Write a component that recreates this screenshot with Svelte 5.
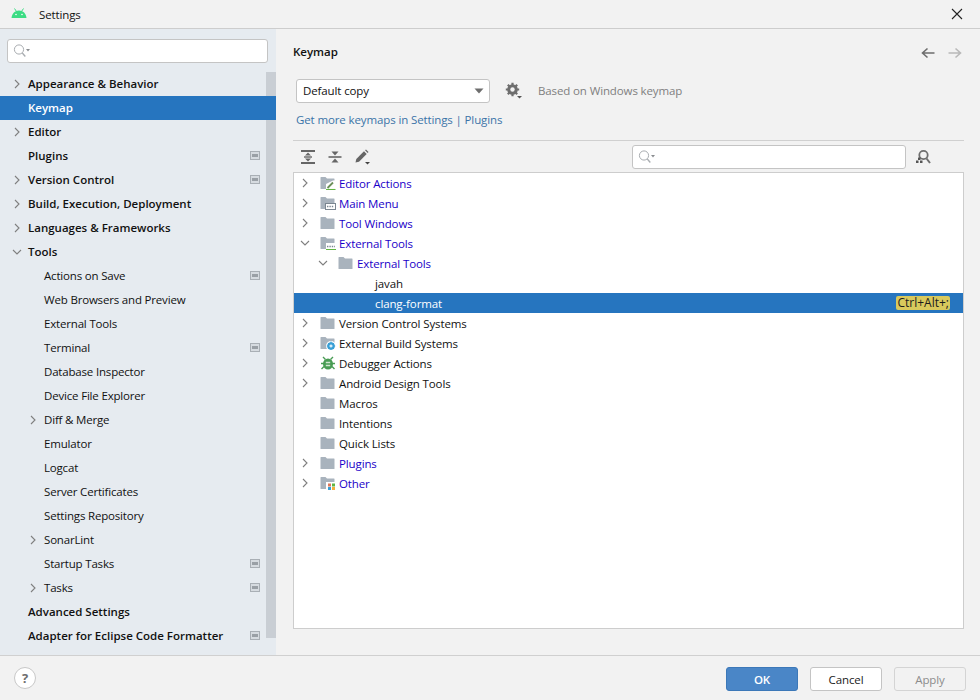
<script>
  const side = [
    { t: 'Appearance & Behavior', b: 1, a: 1 },
    { t: 'Keymap', b: 1, sel: 1 },
    { t: 'Editor', b: 1, a: 1 },
    { t: 'Plugins', b: 1, m: 1 },
    { t: 'Version Control', b: 1, a: 1, m: 1 },
    { t: 'Build, Execution, Deployment', b: 1, a: 1 },
    { t: 'Languages & Frameworks', b: 1, a: 1 },
    { t: 'Tools', b: 1, a: 2 },
    { t: 'Actions on Save', m: 1 },
    { t: 'Web Browsers and Preview' },
    { t: 'External Tools' },
    { t: 'Terminal', m: 1 },
    { t: 'Database Inspector' },
    { t: 'Device File Explorer' },
    { t: 'Diff & Merge', a: 1 },
    { t: 'Emulator' },
    { t: 'Logcat' },
    { t: 'Server Certificates' },
    { t: 'Settings Repository' },
    { t: 'SonarLint', a: 1 },
    { t: 'Startup Tasks', m: 1 },
    { t: 'Tasks', a: 1, m: 1 },
    { t: 'Advanced Settings', b: 1 },
    { t: 'Adapter for Eclipse Code Formatter', b: 1, m: 1 }
  ];
  const tree = [
    { t: 'Editor Actions', a: 1, i: 'edit', blue: 1 },
    { t: 'Main Menu', a: 1, i: 'menu', blue: 1 },
    { t: 'Tool Windows', a: 1, i: 'folder', blue: 1 },
    { t: 'External Tools', a: 2, i: 'ext', blue: 1 },
    { t: 'External Tools', a: 2, i: 'folder', blue: 1, lvl: 1 },
    { t: 'javah', lvl: 2 },
    { t: 'clang-format', lvl: 2, sel: 1, key: 'Ctrl+Alt+;' },
    { t: 'Version Control Systems', a: 1, i: 'folder' },
    { t: 'External Build Systems', a: 1, i: 'build' },
    { t: 'Debugger Actions', a: 1, i: 'bug' },
    { t: 'Android Design Tools', a: 1, i: 'folder' },
    { t: 'Macros', i: 'folder' },
    { t: 'Intentions', i: 'folder' },
    { t: 'Quick Lists', i: 'folder' },
    { t: 'Plugins', a: 1, i: 'folder', blue: 1 },
    { t: 'Other', a: 1, i: 'other', blue: 1 }
  ];
</script>

{#snippet arrow(kind)}
  <svg class="arrow" width="10" height="10" viewBox="0 0 10 10">
    {#if kind === 1}
      <path d="M3 1 L7 5 L3 9" />
    {:else if kind === 2}
      <path d="M1 3 L5 7 L9 3" />
    {/if}
  </svg>
{/snippet}

{#snippet magnifier()}
  <svg width="19" height="14" viewBox="0 0 19 14" class="mag">
    <circle cx="6" cy="5.5" r="4.6" fill="none" stroke="#a8acb0" stroke-width="1" />
    <path d="M9.3 9 L12.3 12.5" stroke="#a8acb0" stroke-width="1.3" />
    <path d="M13 5 L17 5 L15 7.5 Z" fill="#8a8d90" />
  </svg>
{/snippet}

{#snippet folderIcon(kind)}
  <svg width="16" height="14" viewBox="0 0 16 14" class="ficon">
    {#if kind === 'bug'}
      <path d="M3 1 L5.5 3.5 M13 1 L10.5 3.5 M1 7.5 H4 M12 7.5 H15 M1.5 13 L4 10.5 M14.5 13 L12 10.5" stroke="#499c54" stroke-width="1.4" />
      <ellipse cx="8" cy="8" rx="5" ry="5.6" fill="#499c54" />
      <path d="M5.8 6.5 H10.2 M5.8 9.5 H10.2" stroke="#cfe5cf" stroke-width="1.3" />
    {:else}
      <path d="M0.5 1.5 Q0.5 1 1 1 H5.5 L7 2.6 H14 Q14.5 2.6 14.5 3.1 V12.5 Q14.5 13 14 13 H1 Q0.5 13 0.5 12.5 Z" fill="#a9b3bd" />
      {#if kind === 'edit'}
        <path d="M6 14 V8 L13 4.5 H16 V14 Z" fill="#fff" />
        <path d="M7.5 12 L13 6.5" stroke="#6c8f5a" stroke-width="1.8" />
        <path d="M6 13.5 H15.5" stroke="#62b543" stroke-width="1.1" />
      {:else if kind === 'menu'}
        <rect x="5.5" y="7.5" width="10" height="6" fill="#fff" stroke="#7b8791" stroke-width="1" />
        <path d="M7 10.5 H14" stroke="#7b8791" stroke-width="1.4" stroke-dasharray="1.4 1" />
      {:else if kind === 'ext'}
        <rect x="6" y="7" width="10" height="7" fill="#fff" />
        <path d="M7 10.5 H15" stroke="#7b8791" stroke-width="1.4" stroke-dasharray="1.4 1" />
        <path d="M6 13.5 H16" stroke="#62b543" stroke-width="1" />
      {:else if kind === 'build'}
        <circle cx="11" cy="10" r="5" fill="#fff" />
        <circle cx="11" cy="10" r="2.8" fill="none" stroke="#389fd6" stroke-width="2" />
        <path d="M11 5.5 V14 M6.8 10 H15.2 M8 7 L14 13 M14 7 L8 13" stroke="#389fd6" stroke-width="1" />
        <circle cx="11" cy="10" r="1.1" fill="#fff" />
      {:else if kind === 'other'}
        <rect x="6" y="6" width="10" height="8" fill="#fff" />
        <rect x="8" y="7.5" width="3" height="3" fill="#e0785a" />
        <rect x="12" y="7.5" width="3" height="3" fill="#62b543" />
        <rect x="8" y="11" width="3" height="3" fill="#389fd6" />
        <rect x="12" y="11" width="3" height="3" fill="#f4af3d" />
      {/if}
    {/if}
  </svg>
{/snippet}

<div class="win">
  <header class="title">
    <svg class="droid" width="16" height="10" viewBox="0 0 16 10">
      <path d="M0.5 10 C0.8 5.5 4 2.5 8 2.5 C12 2.5 15.2 5.5 15.5 10 Z" fill="#3ddc84" />
      <path d="M3.5 0.5 L5.5 3.5 M12.5 0.5 L10.5 3.5" stroke="#3ddc84" stroke-width="1" />
      <circle cx="5" cy="6.5" r="0.8" fill="#fff" />
      <circle cx="11" cy="6.5" r="0.8" fill="#fff" />
    </svg>
    <span class="ttext">Settings</span>
    <svg class="close" width="12" height="12" viewBox="0 0 12 12">
      <path d="M1 1 L11 11 M11 1 L1 11" stroke="#222" stroke-width="1.1" fill="none" />
    </svg>
  </header>

  <div class="main">
    <aside class="side">
      <div class="sidesearch">
        <div class="search">{@render magnifier()}</div>
      </div>
      <div class="sidelist">
        <div class="thumb"></div>
        {#each side as r}
          <div class="srow" class:sel={r.sel} class:bold={r.b} class:sub={!r.b}>
            <span class="sarrow">{#if r.a}{@render arrow(r.a)}{/if}</span>
            <span class="stext">{r.t}</span>
            {#if r.m}
              <svg class="mod" width="10" height="9" viewBox="0 0 10 9">
                <rect x="0.5" y="0.5" width="9" height="8" fill="#d6dbe0" stroke="#a9afb5" />
                <rect x="2" y="3" width="6" height="3" fill="#9aa0a6" />
              </svg>
            {/if}
          </div>
        {/each}
      </div>
    </aside>

    <section class="pane">
      <div class="phead">
        <span class="ptitle">Keymap</span>
        <div class="nav">
          <svg width="14" height="12" viewBox="0 0 14 12"><path d="M13.5 6 H2 M6.5 1.5 L1.5 6 L6.5 10.5" stroke="#6e6e6e" stroke-width="1.6" fill="none" /></svg>
          <svg width="14" height="12" viewBox="0 0 14 12"><path d="M0.5 6 H12 M7.5 1.5 L12.5 6 L7.5 10.5" stroke="#b9b9b9" stroke-width="1.6" fill="none" /></svg>
        </div>
      </div>

      <div class="kmrow">
        <div class="combo">
          <span>Default copy</span>
          <svg width="10" height="6" viewBox="0 0 10 6"><path d="M0.5 0.5 H9.5 L5 5.5 Z" fill="#6e6e6e" /></svg>
        </div>
        <svg class="gear" width="18" height="18" viewBox="0 0 18 18">
          <circle cx="7.5" cy="7.5" r="3.8" fill="none" stroke="#6e6e6e" stroke-width="3" />
          <path d="M7.5 0.8 V14.2 M0.8 7.5 H14.2 M2.8 2.8 L12.2 12.2 M12.2 2.8 L2.8 12.2" stroke="#6e6e6e" stroke-width="2.2" />
          <circle cx="7.5" cy="7.5" r="2.2" fill="#f2f2f2" />
          <path d="M12 14 H17 L14.5 16.5 Z" fill="#555" />
        </svg>
        <span class="based">Based on Windows keymap</span>
      </div>

      <div class="link">Get more keymaps in Settings | Plugins</div>
      <div class="sep"></div>

      <div class="tools">
        <div class="toolicons">
          <svg width="14" height="14" viewBox="0 0 14 14">
            <path d="M0 1 H14 M0 13 H14" stroke="#666" stroke-width="2" />
            <path d="M3 7 H11" stroke="#666" stroke-width="1.4" />
            <path d="M7 2.5 L10 5.5 H4 Z M7 11.5 L10 8.5 H4 Z" fill="#666" />
          </svg>
          <svg width="14" height="14" viewBox="0 0 14 14">
            <path d="M0.5 7 H13.5" stroke="#666" stroke-width="1.6" />
            <path d="M7 5.5 L10.5 1.5 H3.5 Z M7 8.5 L10.5 12.5 H3.5 Z" fill="#666" />
          </svg>
          <svg width="16" height="16" viewBox="0 0 16 16">
            <path d="M0.5 13.5 L1.3 10 L9 2.3 L11.7 5 L4 12.7 Z" fill="#666" />
            <path d="M10 1.3 L11 0.5 L13.5 3 L12.7 4" fill="#666" />
            <path d="M10 13 H15 L12.5 15.5 Z" fill="#444" />
          </svg>
        </div>
        <div class="search rsearch">{@render magnifier()}</div>
        <svg class="fsearch" width="16" height="16" viewBox="0 0 16 16">
          <circle cx="8.5" cy="6" r="4.2" fill="none" stroke="#6e6e6e" stroke-width="1.8" />
          <path d="M11.5 9.5 L15 14" stroke="#6e6e6e" stroke-width="2" />
          <path d="M1 11.5 h2.5 v2.5 h-2.5 z M5 11.5 h2.5 v2.5 h-2.5 z M3 8.5 h2.5 v2.5 h-2.5 z" fill="#555" />
        </svg>
      </div>

      <div class="tree">
        {#each tree as r}
          <div class="trow" class:sel={r.sel} class:l1={r.lvl === 1} class:l2={r.lvl === 2}>
            {#if r.lvl !== 2}<span class="tarrow">{#if r.a}{@render arrow(r.a)}{/if}</span>{/if}
            {#if r.i}{@render folderIcon(r.i)}{/if}
            <span class="ttl" class:blue={r.blue}>{r.t}</span>
            {#if r.key}<span class="key">{r.key}</span>{/if}
          </div>
        {/each}
      </div>
    </section>
  </div>

  <footer class="foot">
    <div class="help">?</div>
    <div class="btns">
      <button class="btn ok">OK</button>
      <button class="btn">Cancel</button>
      <button class="btn off">Apply</button>
    </div>
  </footer>
</div>

<style>
  :global(body) { margin: 0; background: #f2f2f2; }
  .win {
    width: 980px; height: 700px; display: flex; flex-direction: column;
    font-family: "Open Sans", "Noto Sans", sans-serif; font-size: 11.5px; letter-spacing: -0.12px; color: #111;
    background: #f2f2f2; overflow: hidden;
  }
  .title {
    height: 29px; flex: none; display: flex; align-items: center; box-sizing: border-box;
    border-bottom: 1px solid #cdcdcd; padding-left: 11px; padding-right: 17px;
  }
  .droid { margin-right: 12px; margin-top: -2px; }
  .ttext { flex: 1; }
  .main { flex: 1; display: flex; min-height: 0; }
  .side { width: 276px; flex: none; background: #e6ebf0; display: flex; flex-direction: column; }
  .sidesearch { padding: 10px 8px 9px 7px; }
  .search {
    height: 24px; box-sizing: border-box; background: #fff; border: 1px solid #c4c4c4; border-radius: 3px;
    display: flex; align-items: center; padding-left: 5px;
  }
  .mag { display: block; }
  .sidelist { position: relative; flex: 1; }
  .thumb { position: absolute; right: 0; top: 0; width: 10px; height: 566px; background: #c9ced4; }
  .srow { height: 24px; display: flex; align-items: center; position: relative; }
  .srow.sel { background: #2675bf; color: #fff; }
  .sarrow { width: 28px; flex: none; display: flex; justify-content: flex-end; padding-right: 6px; box-sizing: border-box; }
  .sub .sarrow { width: 44px; }
  .stext { position: relative; top: -1px; letter-spacing: -0.18px; }
  .bold .stext { font-weight: 600; letter-spacing: 0; }
  .mod { position: absolute; left: 250px; top: 7px; }
  .arrow { display: block; }
  .arrow path { fill: none; stroke: #7f7f7f; stroke-width: 1.1; }

  .pane { flex: 1; min-width: 0; padding: 0 16px 26px 17px; display: flex; flex-direction: column; }
  .phead { height: 47px; display: flex; align-items: center; justify-content: space-between; flex: none; }
  .ptitle { font-weight: 600; letter-spacing: 0; position: relative; top: -1px; }
  .nav { display: flex; gap: 13px; margin-right: 2px; }
  .kmrow { display: flex; align-items: center; height: 25px; padding-left: 3px; flex: none; margin-top: 2px; padding-bottom: 0; }
  .combo {
    width: 194px; height: 24px; box-sizing: border-box; background: #fff; border: 1px solid #c4c4c4; border-radius: 3px;
    display: flex; align-items: center; justify-content: space-between; padding: 0 5px 0 6px;
  }
  .gear { margin-left: 15px; }
  .based { margin-left: 15px; color: #808080; }
  .link { color: #3b74a8; padding-left: 3px; margin-top: 8px; height: 21px; line-height: 18px; flex: none; }
  .sep { height: 1px; background: #d0d0d0; flex: none; margin-top: 8px; }
  .tools { display: flex; align-items: center; height: 31px; flex: none; }
  .toolicons { display: flex; align-items: center; gap: 13px; padding-left: 8px; width: 339px; box-sizing: border-box; }
  .rsearch { width: 274px; height: 24px; flex: none; margin-top: 1px; }
  .fsearch { margin-left: 9px; }
  .tree { flex: 1; background: #fff; border: 1px solid #cdcdcd; }
  .trow { height: 20px; display: flex; align-items: center; padding-left: 6px; position: relative; }
  .trow.l1 { padding-left: 24px; }
  .trow.l2 { padding-left: 81px; }
  .trow.sel { background: #2675bf; color: #fff; }
  .tarrow { width: 20px; flex: none; }
  .ficon { margin-right: 3px; flex: none; display: block; }
  .blue { color: #1a00c8; }
  .key {
    position: absolute; right: 13px; top: 3px; height: 14px; line-height: 14px; padding: 0 1px;
    background: #d9c95c; color: #1c1c1c; border-radius: 2px; font-size: 12px; letter-spacing: 0;
  }
  .foot {
    height: 45px; flex: none; border-top: 1px solid #d0d0d0; box-sizing: border-box;
    display: flex; align-items: center; justify-content: space-between; padding: 0 14px;
  }
  .help {
    width: 22px; height: 22px; box-sizing: border-box; border: 1px solid #c8c8c8; border-radius: 50%; background: #fff;
    display: flex; align-items: center; justify-content: center; font-weight: 700; font-size: 13px; color: #6e6e6e;
  }
  .btns { display: flex; gap: 12px; padding-top: 2px; }
  .btn {
    width: 72px; height: 24px; box-sizing: border-box; padding: 0; background: #fff; border: 1px solid #c4c4c4; border-radius: 3px;
    font: inherit; letter-spacing: inherit; color: #1a1a1a;
  }
  .ok { background: #4a86c7; border-color: #3c78b8; color: #fff; font-weight: 600; }
  .off { background: #f2f2f2; color: #8c8c8c; border-color: #d4d4d4; }
</style>
